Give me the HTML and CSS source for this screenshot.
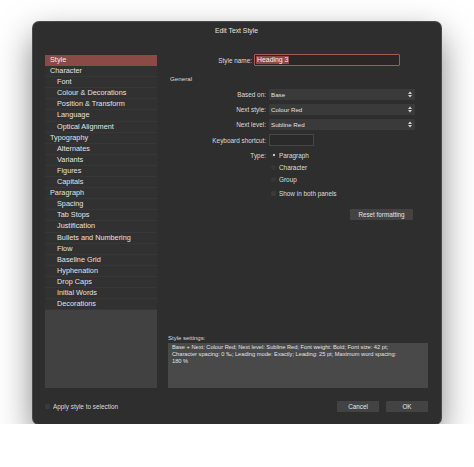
FILE: index.html
```html
<!DOCTYPE html>
<html>

<head>
    <title>Edit Text Style</title>
    <link rel="stylesheet" href="styles.css">
</head>

<body>
    <div class="dialog">
        <div class="title">Edit Text Style</div>

        <div class="content">
            <div class="sidebar">
                <div class="item selected">Style</div>
                <div class="item">Character</div>
                <div class="item sub">Font</div>
                <div class="item sub">Colour &amp; Decorations</div>
                <div class="item sub">Position &amp; Transform</div>
                <div class="item sub">Language</div>
                <div class="item sub">Optical Alignment</div>
                <div class="item">Typography</div>
                <div class="item sub">Alternates</div>
                <div class="item sub">Variants</div>
                <div class="item sub">Figures</div>
                <div class="item sub">Capitals</div>
                <div class="item">Paragraph</div>
                <div class="item sub">Spacing</div>
                <div class="item sub">Tab Stops</div>
                <div class="item sub">Justification</div>
                <div class="item sub">Bullets and Numbering</div>
                <div class="item sub">Flow</div>
                <div class="item sub">Baseline Grid</div>
                <div class="item sub">Hyphenation</div>
                <div class="item sub">Drop Caps</div>
                <div class="item sub">Initial Words</div>
                <div class="item sub">Decorations</div>
            </div>

            <div class="main">
                <div class="name-row">
                    <span class="name-label">Style name:</span>
                    <div class="name-input"><span class="sel-text">Heading 3</span></div>
                </div>

                <div class="section">General</div>

                <div class="row">
                    <span class="label">Based on:</span>
                    <div class="select">Base
                        <svg class="arrows" width="4" height="7" viewBox="0 0 4 7"><path d="M0 3L2 0.5L4 3Z M0 4L2 6.5L4 4Z" fill="#cfcfcf"/></svg>
                    </div>
                </div>
                <div class="row">
                    <span class="label">Next style:</span>
                    <div class="select">Colour Red
                        <svg class="arrows" width="4" height="7" viewBox="0 0 4 7"><path d="M0 3L2 0.5L4 3Z M0 4L2 6.5L4 4Z" fill="#cfcfcf"/></svg>
                    </div>
                </div>
                <div class="row">
                    <span class="label">Next level:</span>
                    <div class="select">Subline Red
                        <svg class="arrows" width="4" height="7" viewBox="0 0 4 7"><path d="M0 3L2 0.5L4 3Z M0 4L2 6.5L4 4Z" fill="#cfcfcf"/></svg>
                    </div>
                </div>
                <div class="row shortcut-row">
                    <span class="label">Keyboard shortcut:</span>
                    <div class="shortcut"></div>
                </div>

                <div class="row type-row">
                    <span class="label">Type:</span>
                    <span class="radio on"></span><span class="opt">Paragraph</span>
                </div>
                <div class="row type-row">
                    <span class="label"></span>
                    <span class="radio"></span><span class="opt">Character</span>
                </div>
                <div class="row type-row">
                    <span class="label"></span>
                    <span class="radio"></span><span class="opt">Group</span>
                </div>
                <div class="row type-row both">
                    <span class="label"></span>
                    <span class="check"></span><span class="opt">Show in both panels</span>
                </div>

                <div class="reset-wrap">
                    <button class="btn reset">Reset formatting</button>
                </div>

                <div class="settings">
                    <div class="settings-label">Style settings:</div>
                    <div class="settings-box">Base + Next: Colour Red; Next level: Subline Red; Font weight: Bold; Font size: 42 pt;<br>Character spacing: 0 ‰; Leading mode: Exactly; Leading: 25 pt; Maximum word spacing:<br>180 %</div>
                </div>
            </div>
        </div>

        <div class="footer">
            <div class="apply">
                <span class="check"></span>
                <span>Apply style to selection</span>
            </div>
            <div class="buttons">
                <button class="btn">Cancel</button>
                <button class="btn">OK</button>
            </div>
        </div>
    </div>
</body>

</html>
```

FILE: styles.css
```css
body {
    margin: 0;
    background: #ffffff;
    font-family: "Liberation Sans", Arial, sans-serif;
    color: #dcdcdc;
}

.dialog {
    width: 408px;
    height: 402px;
    margin: 22px 0 0 33px;
    padding: 0 13px 0 12px;
    box-sizing: border-box;
    background: #2e2e2e;
    border-radius: 6px;
    box-shadow: 0 0 0 1px #4a4a4a, 0 14px 34px rgba(0, 0, 0, 0.5);
    display: flex;
    flex-direction: column;
}

.title {
    height: 17px;
    line-height: 17px;
    text-align: center;
    font-size: 6.8px;
    color: #e4e4e4;
}

.content {
    display: flex;
    margin-top: 15px;
}

/* left list */
.sidebar {
    width: 112px;
    height: 333px;
    margin-top: 1px;
    background: #414141;
}

.item {
    height: 10.1px;
    line-height: 10px;
    border-bottom: 1px solid #373737;
    padding-left: 5px;
    font-size: 7.3px;
    color: #e2e2e2;
    background: #313131;
}

.item.sub {
    padding-left: 12px;
}

.item.selected {
    background: #8c4a46;
    border-bottom-color: #8c4a46;
    color: #f4e8e8;
}

/* right side */
.main {
    flex: 1;
    padding-left: 11px;
    display: flex;
    flex-direction: column;
    font-size: 6.4px;
}

.name-row {
    display: flex;
    align-items: center;
    height: 12px;
}

.name-label {
    width: 84px;
    text-align: right;
    margin-right: 2px;
}

.name-input {
    width: 146px;
    height: 12px;
    box-sizing: border-box;
    border: 1.5px solid #a35b58;
    border-radius: 1px;
    background: #2c2626;
    display: flex;
    align-items: center;
    padding-left: 1px;
    font-size: 6.9px;
}

.sel-text {
    background: #8a4a47;
    color: #f6eaea;
    line-height: 8px;
    padding: 0 1px;
}

.section {
    margin-top: 8px;
    height: 10px;
    line-height: 10px;
    padding-left: 2px;
    font-size: 6.2px;
}

.row {
    display: flex;
    align-items: center;
    height: 11px;
    margin-top: 4px;
}

.section + .row {
    margin-top: 5px;
}

.label {
    width: 98px;
    text-align: right;
    margin-right: 3px;
    flex-shrink: 0;
}

.select {
    width: 146px;
    height: 11px;
    line-height: 11px;
    box-sizing: border-box;
    padding-left: 2px;
    background: #3a3a3a;
    border-radius: 1px;
    position: relative;
    font-size: 6.2px;
    color: #e0e0e0;
}

.arrows {
    position: absolute;
    right: 3px;
    top: 2px;
}

.shortcut-row {
    height: 12px;
}

.shortcut {
    width: 45px;
    height: 12px;
    box-sizing: border-box;
    border: 1px solid #474747;
    background: #2a2a2a;
}

.type-row {
    height: 12px;
    margin-top: 0;
}

.shortcut-row + .type-row {
    margin-top: 3px;
}

.type-row.both {
    margin-top: 2px;
}

.radio {
    width: 5px;
    height: 5px;
    border-radius: 50%;
    background: #363636;
    margin: 0 3px 0 2px;
    position: relative;
}

.radio.on::after {
    content: "";
    position: absolute;
    left: 1.5px;
    top: 1.5px;
    width: 2px;
    height: 2px;
    border-radius: 50%;
    background: #f0f0f0;
}

.check {
    width: 5px;
    height: 5px;
    background: #3a3a3a;
    border-radius: 1px;
    margin: 0 3px 0 2px;
}

.opt {
    color: #dedede;
}

.reset-wrap {
    display: flex;
    justify-content: flex-end;
    margin-top: 10px;
    padding-right: 15px;
}

.btn {
    height: 11px;
    padding: 0;
    border: none;
    border-radius: 1px;
    background: #434343;
    color: #e4e4e4;
    font-family: "Liberation Sans", Arial, sans-serif;
    font-size: 6.3px;
    line-height: 11px;
    width: 42px;
}

.btn.reset {
    width: 63px;
}

.settings {
    margin-top: auto;
}

.settings-label {
    height: 9px;
    line-height: 9px;
    font-size: 6px;
}

.settings-box {
    height: 45px;
    box-sizing: border-box;
    padding: 1px 4px;
    background: #494949;
    font-size: 5.7px;
    line-height: 7px;
    color: #e2e2e2;
    white-space: nowrap;
}

/* bottom bar */
.footer {
    display: flex;
    justify-content: space-between;
    align-items: center;
    padding-top: 12px;
    height: 12px;
}

.apply {
    display: flex;
    align-items: center;
    font-size: 6.4px;
}

.apply .check {
    margin: 0 3px 0 0;
}

.buttons {
    display: flex;
    gap: 7px;
}
```
